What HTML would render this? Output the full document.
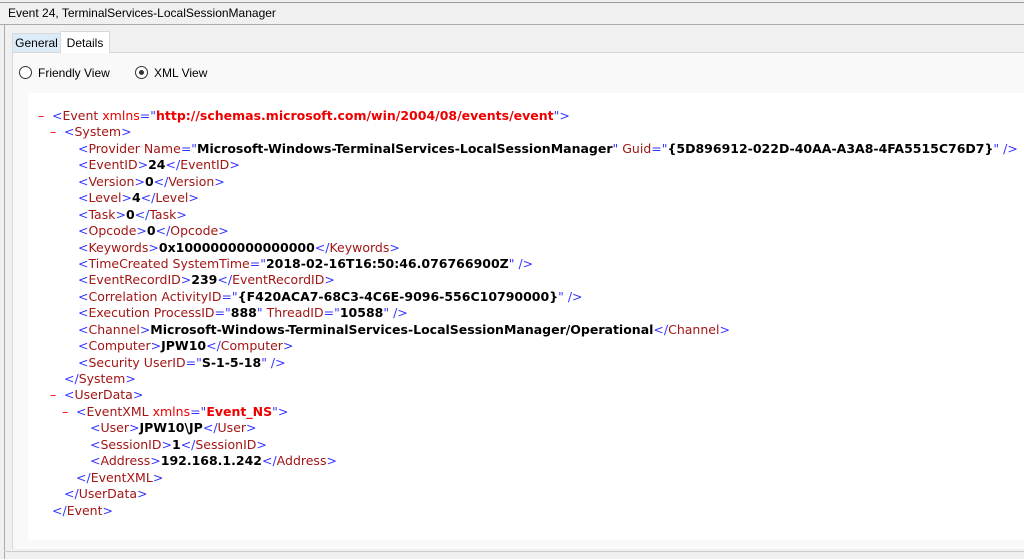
<!DOCTYPE html>
<html><head><meta charset="utf-8"><style>
body{margin:0;width:1024px;height:559px;background:#f0f0f0;font-family:"Liberation Sans",sans-serif;overflow:hidden;position:relative}
.title{position:absolute;left:0;top:2px;width:1024px;border-top:1px solid #999;border-bottom:1px solid #aaa;background:#f0f0f0;font-size:12px;line-height:21px;padding-left:8px;box-sizing:border-box;height:23px}
.lb{position:absolute;left:4px;top:24px;width:1px;height:535px;background:#aaa}
.bb{position:absolute;left:4px;top:551px;width:1020px;height:1px;background:#ccc}
.tab{position:absolute;top:33px;height:19px;font-size:12px;line-height:19px;text-align:center;border:1px solid #d9d9d9;border-bottom:none;box-sizing:border-box}
.panel{position:absolute;left:12px;top:52px;width:1012px;height:496px;background:#f9f9f9;border-top:1px solid #d9d9d9;border-left:1px solid #d9d9d9}
.radio{position:absolute;top:66px;font-size:12px;line-height:14px}
.rc{display:inline-block;width:11px;height:11px;border:1px solid #333;border-radius:50%;vertical-align:-2px;margin-right:6px;position:relative;background:#fff}
.rc i{position:absolute;left:3px;top:3px;width:5px;height:5px;border-radius:50%;background:#333}
.xml{position:absolute;left:28px;top:93px;width:996px;height:447px;background:#fff}
.c{position:absolute;left:0;top:15px;font-family:"DejaVu Sans",Verdana,sans-serif;font-size:12.5px;line-height:16.45px;color:#000}
.c div{position:relative;white-space:pre;height:16.45px}
.m{color:#e00;position:absolute;margin-left:-14px}.b{color:#3333ff}.t{color:#a31515}.a{color:#e00}.v{font-weight:bold}.r{color:#e00;font-weight:bold}
</style></head><body>
<div class="title">Event 24, TerminalServices-LocalSessionManager</div>
<div class="lb"></div>
<div class="panel"></div>
<div class="tab" style="left:12px;width:49px;background:#dcebf8">General</div>
<div class="tab" style="left:60px;width:50px;background:#fff;top:31px;height:22px;line-height:22px">Details</div>
<div class="radio" style="left:19px"><span class="rc"></span>Friendly View</div>
<div class="radio" style="left:135px"><span class="rc"><i></i></span>XML View</div>
<div class="xml"><div class="c"><div style="padding-left:24px"><span class="m">–</span><span class="b">&lt;</span><span class="t">Event</span> <span class="a">xmlns</span><span class="b">="</span><span class="r">http://schemas.microsoft.com/win/2004/08/events/event</span><span class="b">"&gt;</span></div><div style="padding-left:36px"><span class="m">–</span><span class="b">&lt;</span><span class="t">System</span><span class="b">&gt;</span></div><div style="padding-left:50px"><span class="b">&lt;</span><span class="t">Provider Name</span><span class="b">="</span><span class="v">Microsoft-Windows-TerminalServices-LocalSessionManager</span><span class="b">"</span> <span class="t">Guid</span><span class="b">="</span><span class="v">{5D896912-022D-40AA-A3A8-4FA5515C76D7}</span><span class="b">" /&gt;</span></div><div style="padding-left:50px"><span class="b">&lt;</span><span class="t">EventID</span><span class="b">&gt;</span><span class="v">24</span><span class="b">&lt;/</span><span class="t">EventID</span><span class="b">&gt;</span></div><div style="padding-left:50px"><span class="b">&lt;</span><span class="t">Version</span><span class="b">&gt;</span><span class="v">0</span><span class="b">&lt;/</span><span class="t">Version</span><span class="b">&gt;</span></div><div style="padding-left:50px"><span class="b">&lt;</span><span class="t">Level</span><span class="b">&gt;</span><span class="v">4</span><span class="b">&lt;/</span><span class="t">Level</span><span class="b">&gt;</span></div><div style="padding-left:50px"><span class="b">&lt;</span><span class="t">Task</span><span class="b">&gt;</span><span class="v">0</span><span class="b">&lt;/</span><span class="t">Task</span><span class="b">&gt;</span></div><div style="padding-left:50px"><span class="b">&lt;</span><span class="t">Opcode</span><span class="b">&gt;</span><span class="v">0</span><span class="b">&lt;/</span><span class="t">Opcode</span><span class="b">&gt;</span></div><div style="padding-left:50px"><span class="b">&lt;</span><span class="t">Keywords</span><span class="b">&gt;</span><span class="v">0x1000000000000000</span><span class="b">&lt;/</span><span class="t">Keywords</span><span class="b">&gt;</span></div><div style="padding-left:50px"><span class="b">&lt;</span><span class="t">TimeCreated SystemTime</span><span class="b">="</span><span class="v">2018-02-16T16:50:46.076766900Z</span><span class="b">" /&gt;</span></div><div style="padding-left:50px"><span class="b">&lt;</span><span class="t">EventRecordID</span><span class="b">&gt;</span><span class="v">239</span><span class="b">&lt;/</span><span class="t">EventRecordID</span><span class="b">&gt;</span></div><div style="padding-left:50px"><span class="b">&lt;</span><span class="t">Correlation ActivityID</span><span class="b">="</span><span class="v">{F420ACA7-68C3-4C6E-9096-556C10790000}</span><span class="b">" /&gt;</span></div><div style="padding-left:50px"><span class="b">&lt;</span><span class="t">Execution ProcessID</span><span class="b">="</span><span class="v">888</span><span class="b">"</span> <span class="t">ThreadID</span><span class="b">="</span><span class="v">10588</span><span class="b">" /&gt;</span></div><div style="padding-left:50px"><span class="b">&lt;</span><span class="t">Channel</span><span class="b">&gt;</span><span class="v">Microsoft-Windows-TerminalServices-LocalSessionManager/Operational</span><span class="b">&lt;/</span><span class="t">Channel</span><span class="b">&gt;</span></div><div style="padding-left:50px"><span class="b">&lt;</span><span class="t">Computer</span><span class="b">&gt;</span><span class="v">JPW10</span><span class="b">&lt;/</span><span class="t">Computer</span><span class="b">&gt;</span></div><div style="padding-left:50px"><span class="b">&lt;</span><span class="t">Security UserID</span><span class="b">="</span><span class="v">S-1-5-18</span><span class="b">" /&gt;</span></div><div style="padding-left:36px"><span class="b">&lt;/</span><span class="t">System</span><span class="b">&gt;</span></div><div style="padding-left:36px"><span class="m">–</span><span class="b">&lt;</span><span class="t">UserData</span><span class="b">&gt;</span></div><div style="padding-left:48px"><span class="m">–</span><span class="b">&lt;</span><span class="t">EventXML</span> <span class="a">xmlns</span><span class="b">="</span><span class="r">Event_NS</span><span class="b">"&gt;</span></div><div style="padding-left:62px"><span class="b">&lt;</span><span class="t">User</span><span class="b">&gt;</span><span class="v">JPW10\JP</span><span class="b">&lt;/</span><span class="t">User</span><span class="b">&gt;</span></div><div style="padding-left:62px"><span class="b">&lt;</span><span class="t">SessionID</span><span class="b">&gt;</span><span class="v">1</span><span class="b">&lt;/</span><span class="t">SessionID</span><span class="b">&gt;</span></div><div style="padding-left:62px"><span class="b">&lt;</span><span class="t">Address</span><span class="b">&gt;</span><span class="v">192.168.1.242</span><span class="b">&lt;/</span><span class="t">Address</span><span class="b">&gt;</span></div><div style="padding-left:48px"><span class="b">&lt;/</span><span class="t">EventXML</span><span class="b">&gt;</span></div><div style="padding-left:36px"><span class="b">&lt;/</span><span class="t">UserData</span><span class="b">&gt;</span></div><div style="padding-left:24px"><span class="b">&lt;/</span><span class="t">Event</span><span class="b">&gt;</span></div></div></div>
<div class="bb"></div>
</body></html>
